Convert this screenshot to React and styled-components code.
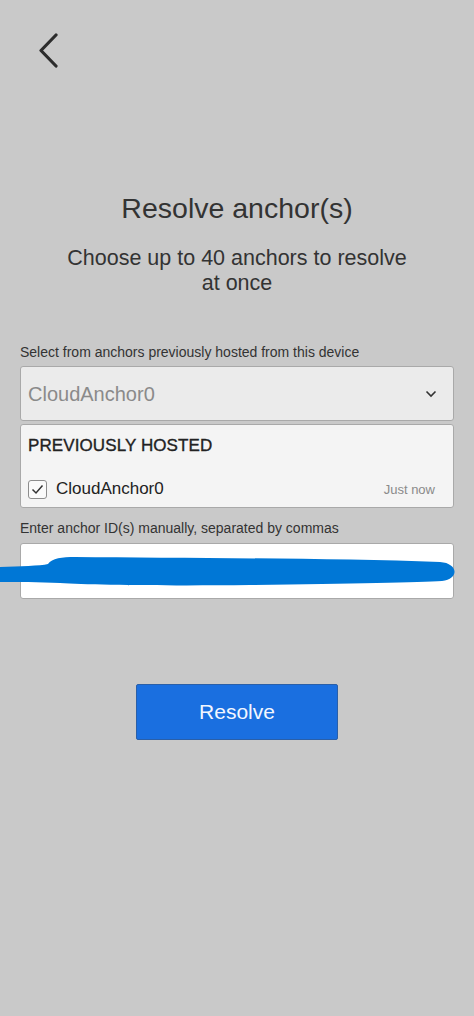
import React from 'react'
import styled, {createGlobalStyle} from 'styled-components'

const Global = createGlobalStyle`
  html, body {
    margin: 0;
    padding: 0;
    background: #c9c9c9;
  }
  body {
    font-family: "Liberation Sans", Arial, sans-serif;
    color: #333;
  }
`

const Page = styled.div`
  width: 474px;
  min-height: 1016px;
  display: flex;
  flex-direction: column;
  background: #c9c9c9;
`

const TopBar = styled.div`
  height: 100px;
  display: flex;
  align-items: flex-start;
  padding: 33px 0 0 36px;
  box-sizing: border-box;
`

const BackBtn = styled.button`
  width: 26px;
  height: 36px;
  padding: 0;
  border: none;
  background: transparent;
  display: flex;
  align-items: center;
  justify-content: center;
`

const Header = styled.div`
  display: flex;
  flex-direction: column;
  align-items: center;
  margin-top: 91px;
`

const Title = styled.h1`
  margin: 0;
  font-size: 28.5px;
  font-weight: 400;
  color: #333;
  line-height: 34px;
`

const Subtitle = styled.p`
  margin: 21px 0 0;
  width: 350px;
  text-align: center;
  font-size: 21.5px;
  line-height: 25px;
  color: #333;
`

const Form = styled.div`
  display: flex;
  flex-direction: column;
  padding: 0 20px 0 20px;
  margin-top: 47px;
`

const Label = styled.div`
  font-size: 14px;
  line-height: 18px;
  color: #333;
  margin-top: ${p => p.$top || 0}px;
  margin-bottom: ${p => p.$gap || 6}px;
`

const Select = styled.div`
  height: 55px;
  box-sizing: border-box;
  border: 1px solid #a9a9a9;
  border-radius: 3px;
  background: #ebebeb;
  display: flex;
  align-items: center;
  justify-content: space-between;
  padding: 1px 16px 0 7px;
  font-size: 20px;
  color: #8a8a8a;
`

const Panel = styled.div`
  margin-top: 3px;
  height: 84px;
  box-sizing: border-box;
  border: 1px solid #a9a9a9;
  border-radius: 3px;
  background: #f4f4f4;
  display: flex;
  flex-direction: column;
  padding: 10px 18px 0 7px;
`

const PanelHead = styled.div`
  font-size: 17px;
  color: #222;
  line-height: 22px;
  letter-spacing: 0.1px;
  -webkit-text-stroke: 0.35px #222;
`

const Row = styled.div`
  margin-top: 22px;
  display: flex;
  align-items: center;
`

const Check = styled.span`
  width: 19px;
  height: 19px;
  box-sizing: border-box;
  border: 1px solid #8d8d8d;
  border-radius: 3px;
  background: #fafafa;
  display: flex;
  align-items: center;
  justify-content: center;
  margin-right: 9px;
`

const RowName = styled.span`
  flex: 1;
  font-size: 17px;
  color: #222;
`

const RowTime = styled.span`
  font-size: 13px;
  color: #8a8a8a;
`

const InputWrap = styled.div`
  position: relative;
  height: 56px;
`

const Input = styled.div`
  height: 100%;
  box-sizing: border-box;
  border: 1px solid #a9a9a9;
  border-radius: 3px;
  background: #fff;
`

const Scribble = styled.svg`
  position: absolute;
  left: -20px;
  top: 12px;
`

const ButtonRow = styled.div`
  display: flex;
  justify-content: center;
  margin-top: 85px;
`

const Button = styled.button`
  width: 202px;
  height: 56px;
  border: 1px solid #2a5fa8;
  border-radius: 2px;
  background: #1a6fe0;
  color: #f2f6ff;
  font-family: "Liberation Sans", Arial, sans-serif;
  font-size: 21px;
`

const App = () => {
  return (
    <>
      <Global />
      <Page>
        <TopBar>
          <BackBtn aria-label="Back">
            <svg width="26" height="36" viewBox="0 0 26 36">
              <path d="M20 2 L5 17.5 L20 33" fill="none" stroke="#2c2c2c" strokeWidth="3.2" strokeLinecap="round" strokeLinejoin="round" />
            </svg>
          </BackBtn>
        </TopBar>
        <Header>
          <Title>Resolve anchor(s)</Title>
          <Subtitle>Choose up to 40 anchors to resolve at once</Subtitle>
        </Header>
        <Form>
          <Label $gap={5}>Select from anchors previously hosted from this device</Label>
          <Select>
            <span>CloudAnchor0</span>
            <svg width="12" height="8" viewBox="0 0 12 8">
              <path d="M1.5 1.5 L6 6 L10.5 1.5" fill="none" stroke="#333" strokeWidth="1.6" />
            </svg>
          </Select>
          <Panel>
            <PanelHead>PREVIOUSLY HOSTED</PanelHead>
            <Row>
              <Check>
                <svg width="13" height="11" viewBox="0 0 13 11">
                  <path d="M1.5 5.5 L5 9 L11.5 1.5" fill="none" stroke="#333" strokeWidth="1.5" />
                </svg>
              </Check>
              <RowName>CloudAnchor0</RowName>
              <RowTime>Just now</RowTime>
            </Row>
          </Panel>
          <Label $top={11} $gap={6}>Enter anchor ID(s) manually, separated by commas</Label>
          <InputWrap>
            <Input />
            <Scribble width="460" height="34" viewBox="0 0 460 34">
              <path
                d="M0 12 C 20 11, 40 11, 48 9 C 52 3, 62 2, 75 2 C 180 3, 330 3, 440 7 C 458 8, 460 24, 442 26 C 420 27, 350 29, 250 30 C 170 31, 90 30, 60 28 C 40 27, 15 27, 0 27 Z"
                fill="#0077d6"
              />
            </Scribble>
          </InputWrap>
        </Form>
        <ButtonRow>
          <Button>Resolve</Button>
        </ButtonRow>
      </Page>
    </>
  )
}

export default App
